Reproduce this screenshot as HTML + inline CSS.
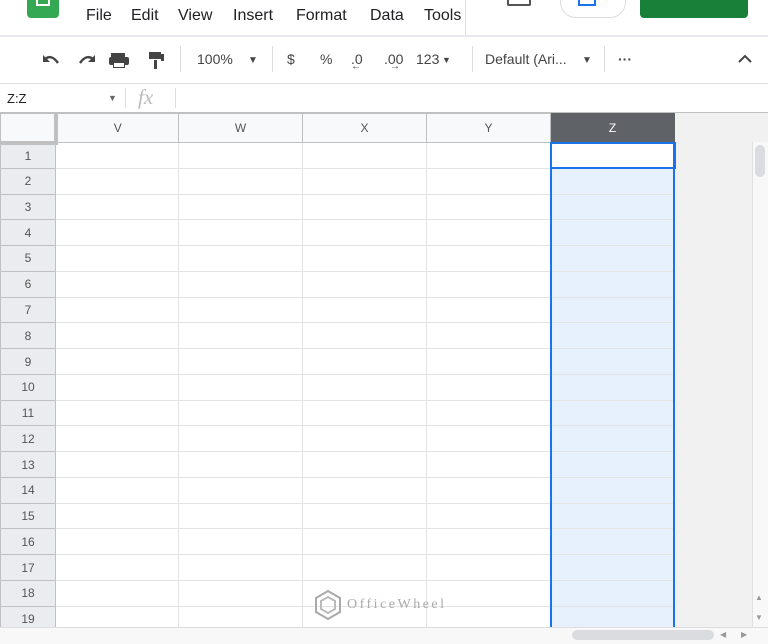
<!DOCTYPE html>
<html><head><style>
*{margin:0;padding:0;box-sizing:border-box}
html,body{width:768px;height:644px;overflow:hidden}
body{background:#fff;font-family:"Liberation Sans",Arial,sans-serif;position:relative;color:#3c4043}
.a{position:absolute}
.menu span{position:absolute;top:7px;font-size:16px;color:#202124}
.tb{font-size:14px;color:#444;position:absolute;top:51px}
.sep{position:absolute;top:46px;width:1px;height:26px;background:#dadce0}
table{border-collapse:collapse;table-layout:fixed;position:absolute;left:0;top:113px;width:674px}
td{border:1px solid #e2e3e3;height:25.78px;font-size:12px;text-align:center;padding:0}
td.h{background:#f8f9fa;color:#555;border-color:#c0c0c0}
td.r{background:#eaecef;color:#555;border-color:#c0c0c0}
td.z{background:#e7f0fd}
</style></head><body>
<div class="a" style="left:27px;top:-8px;width:32px;height:26px;background:#34a853;border-radius:4px"></div>
<div class="a" style="left:36px;top:-4px;width:14px;height:10px;border:2px solid #fff;border-top:none"></div>
<div class="menu">
<span style="left:86px">File</span><span style="left:131px">Edit</span><span style="left:178px">View</span><span style="left:233px">Insert</span><span style="left:296px">Format</span><span style="left:370px">Data</span><span style="left:424px">Tools</span>
</div>
<div class="a" style="left:465px;top:0;width:303px;height:35px;background:#fff;border-left:1px solid #ddd"></div>
<div class="a" style="left:507px;top:-6px;width:24px;height:12px;border:2px solid #555;border-top:none;border-radius:0 0 2px 2px"></div>
<div class="a" style="left:560px;top:-14px;width:66px;height:32px;border:1px solid #dadce0;border-radius:16px"></div>
<div class="a" style="left:578px;top:-4px;width:18px;height:10px;border:2px solid #1a73e8;border-top:none"></div>
<div class="a" style="left:640px;top:-10px;width:108px;height:28px;background:#188038;border-radius:4px"></div>
<div class="a" style="left:0;top:35px;width:768px;height:2px;background:#e8eaed"></div>
<svg class="a" style="left:40px;top:50px" width="140" height="20" viewBox="0 0 140 20">
<path d="M4 10 q7-7 14 3" stroke="#444" stroke-width="2.4" fill="none"/><path d="M3 5v7h7z" fill="#444"/>
<path d="M54 10 q-7-7-14 3" stroke="#444" stroke-width="2.4" fill="none"/><path d="M55 5v7h-7z" fill="#444"/>
<rect x="71" y="3" width="14" height="4" fill="#444"/><rect x="69" y="7" width="20" height="8" rx="2" fill="#444"/><rect x="73" y="12" width="12" height="6" fill="#444"/><rect x="74" y="13" width="10" height="4" fill="#fff"/>
<rect x="109" y="2" width="12" height="7" fill="#444"/><rect x="121" y="4" width="3" height="7" fill="#444"/><rect x="114" y="10" width="3" height="9" fill="#444"/>
</svg>
<div class="sep" style="left:180px"></div>
<span class="tb" style="left:197px">100%</span><span class="tb" style="left:248px;font-size:10px;top:55px">▼</span>
<div class="sep" style="left:272px"></div>
<span class="tb" style="left:287px">$</span><span class="tb" style="left:320px">%</span>
<span class="tb" style="left:351px">.0</span><span class="tb" style="left:384px">.00</span>
<span class="tb" style="left:351px;top:61px;font-size:10px">←</span><span class="tb" style="left:390px;top:61px;font-size:10px">→</span>
<span class="tb" style="left:416px">123</span><span class="tb" style="left:442px;font-size:9px;top:55px">▼</span>
<div class="sep" style="left:472px"></div>
<span class="tb" style="left:485px">Default (Ari...</span><span class="tb" style="left:582px;font-size:10px;top:55px">▼</span>
<div class="sep" style="left:604px"></div>
<span class="tb" style="left:618px;font-weight:bold;top:51px">···</span>
<svg class="a" style="left:737px;top:54px" width="16" height="10"><path d="M2 8l6-6 6 6" stroke="#444" stroke-width="2" fill="none"/></svg>
<div class="a" style="left:0;top:83px;width:768px;height:1px;background:#e0e0e0"></div>
<span class="a" style="left:7px;top:91px;font-size:13px;color:#222">Z:Z</span>
<span class="a" style="left:108px;top:93px;font-size:9px;color:#666">▼</span>
<div class="a" style="left:125px;top:88px;width:1px;height:20px;background:#ddd"></div>
<span class="a" style="left:138px;top:85px;font-size:21px;color:#bbb;font-family:'Liberation Serif',serif;font-style:italic">fx</span>
<div class="a" style="left:175px;top:88px;width:1px;height:20px;background:#ddd"></div>
<div class="a" style="left:0;top:112px;width:768px;height:1px;background:#c0c0c0"></div>
<div class="a" style="left:674px;top:113px;width:94px;height:531px;background:#f1f1f1"></div>
<table>
<colgroup><col style="width:55px"><col style="width:123px"><col style="width:124px"><col style="width:124px"><col style="width:124px"><col style="width:124px"></colgroup>
<tr><td class="h" style="height:29px;border-right:4px solid #c0c0c0;border-bottom:4px solid #c0c0c0"></td><td class="h">V</td><td class="h">W</td><td class="h">X</td><td class="h">Y</td><td class="h" style="background:#5f6368;color:#fff;border-color:#5f6368">Z</td></tr>
<tr><td class="r">1</td><td></td><td></td><td></td><td></td><td style="border:2px solid #1a73e8"></td></tr>
<tr><td class="r">2</td><td></td><td></td><td></td><td></td><td class="z"></td></tr>
<tr><td class="r">3</td><td></td><td></td><td></td><td></td><td class="z"></td></tr>
<tr><td class="r">4</td><td></td><td></td><td></td><td></td><td class="z"></td></tr>
<tr><td class="r">5</td><td></td><td></td><td></td><td></td><td class="z"></td></tr>
<tr><td class="r">6</td><td></td><td></td><td></td><td></td><td class="z"></td></tr>
<tr><td class="r">7</td><td></td><td></td><td></td><td></td><td class="z"></td></tr>
<tr><td class="r">8</td><td></td><td></td><td></td><td></td><td class="z"></td></tr>
<tr><td class="r">9</td><td></td><td></td><td></td><td></td><td class="z"></td></tr>
<tr><td class="r">10</td><td></td><td></td><td></td><td></td><td class="z"></td></tr>
<tr><td class="r">11</td><td></td><td></td><td></td><td></td><td class="z"></td></tr>
<tr><td class="r">12</td><td></td><td></td><td></td><td></td><td class="z"></td></tr>
<tr><td class="r">13</td><td></td><td></td><td></td><td></td><td class="z"></td></tr>
<tr><td class="r">14</td><td></td><td></td><td></td><td></td><td class="z"></td></tr>
<tr><td class="r">15</td><td></td><td></td><td></td><td></td><td class="z"></td></tr>
<tr><td class="r">16</td><td></td><td></td><td></td><td></td><td class="z"></td></tr>
<tr><td class="r">17</td><td></td><td></td><td></td><td></td><td class="z"></td></tr>
<tr><td class="r">18</td><td></td><td></td><td></td><td></td><td class="z"></td></tr>
<tr><td class="r">19</td><td></td><td></td><td></td><td></td><td class="z"></td></tr>
</table>
<div class="a" style="left:550px;top:142px;width:2px;height:486px;background:#1a73e8"></div>
<div class="a" style="left:673px;top:142px;width:2px;height:486px;background:#1a73e8"></div>
<div class="a" style="left:752px;top:142px;width:16px;height:485px;background:#f8f8f8;border-left:1px solid #e0e0e0"></div>
<div class="a" style="left:755px;top:145px;width:10px;height:32px;background:#dadce0;border-radius:5px"></div>
<span class="a" style="left:755px;top:593px;font-size:8px;color:#999">▲</span>
<span class="a" style="left:755px;top:613px;font-size:8px;color:#999">▼</span>
<div class="a" style="left:0;top:627px;width:768px;height:17px;background:#f8f8f8;border-top:1px solid #ddd"></div>
<div class="a" style="left:572px;top:630px;width:142px;height:10px;background:#dadce0;border-radius:5px"></div>
<span class="a" style="left:720px;top:630px;font-size:8px;color:#999">◀</span>
<span class="a" style="left:741px;top:630px;font-size:8px;color:#999">▶</span>
<svg class="a" style="left:313px;top:589px" width="30" height="32"><path d="M15 2l12 7v14l-12 7-12-7V9z" stroke="#aaa" stroke-width="2" fill="none"/><path d="M15 8l7 4v8l-7 4-7-4v-8z" stroke="#bbb" stroke-width="2" fill="none"/></svg>
<span class="a" style="left:347px;top:597px;font-size:14px;color:#aaa;letter-spacing:2.5px;font-family:'Liberation Serif',serif">OfficeWheel</span>
</body></html>
